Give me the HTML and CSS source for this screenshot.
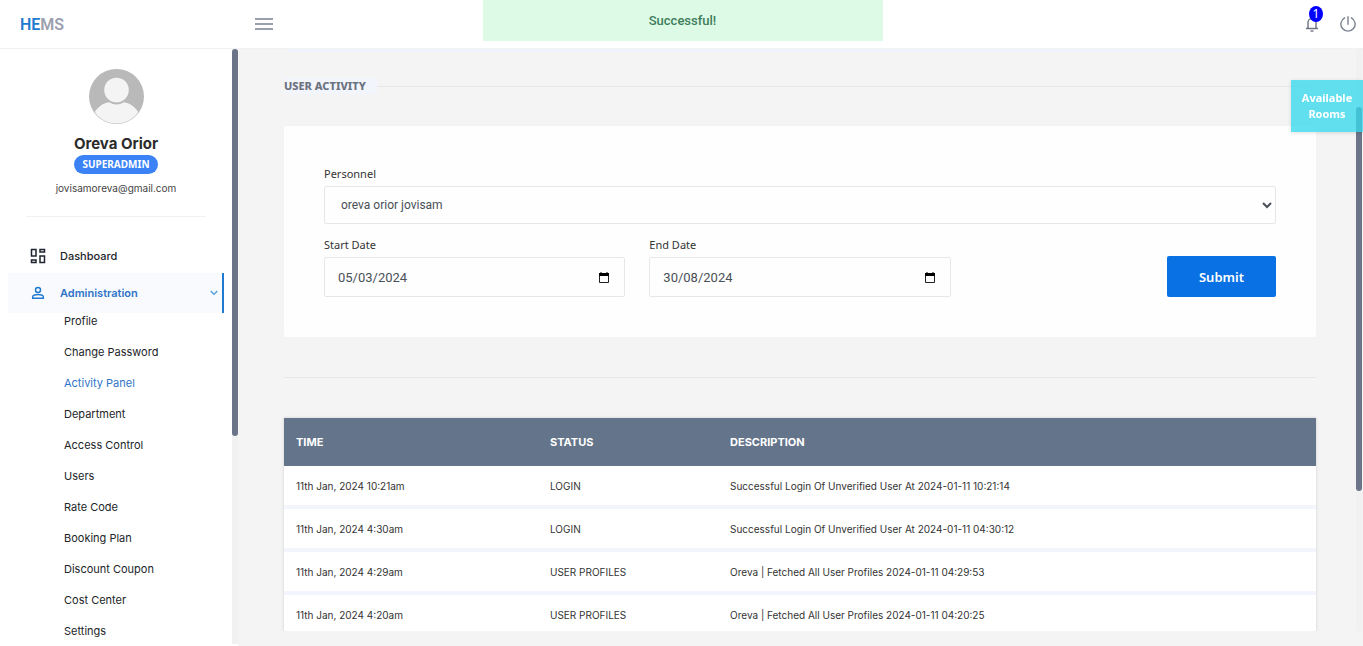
FILE: index.html
```html
<!DOCTYPE html>
<html lang="en">
<head>
    <meta charset="UTF-8">
    <meta name="viewport" content="width=device-width, initial-scale=1.0">
    <title>HEMS - User Activity</title>
    <link rel="stylesheet" href="styles.css">
</head>
<body>
    <header class="header">
        <a href="#" class="logo"><span>HE</span>MS</a>
        <button type="button" class="icon-btn menu-btn" aria-label="Toggle menu">
            <svg width="18" height="12" viewBox="0 0 18 12" fill="#9ca0ae"><path d="M0 0h18v2H0zM0 5h18v2H0zM0 10h18v2H0z"/></svg>
        </button>
        <div class="header-actions">
            <button type="button" class="icon-btn bell-btn" aria-label="Notifications">
                <svg width="14" height="16" viewBox="0 0 14 16" fill="none" stroke="#6b7280" stroke-width="1.4"><path d="M1 12.500h12M3 12.500V6.500a4 4 0 0 1 8 0v6M7 1v1.700"/><path d="M5.500 15h3"/></svg>
                <span class="badge">1</span>
            </button>
            <button type="button" class="icon-btn" aria-label="Log out">
                <svg width="16" height="16" viewBox="0 0 16 16" fill="none" stroke="#7b8290" stroke-width="1.4" stroke-linecap="round"><path d="M8 .8v7.4M4.600 1.800a7.100 7.100 0 1 0 6.800 0"/></svg>
            </button>
        </div>
    </header>

    <div class="alert" role="status">Successful!</div>

    <div class="layout">
        <aside class="sidebar">
            <div class="sidebar-content">
                <div class="profile">
                    <svg class="avatar" width="55" height="55" viewBox="0 0 55 55">
                        <defs><clipPath id="avatarClip"><circle cx="27.500" cy="27.500" r="27"/></clipPath></defs>
                        <circle cx="27.500" cy="27.500" r="27.500" fill="#b9b9b9"/>
                        <g clip-path="url(#avatarClip)" fill="#f4f4f4">
                            <path d="M4 46C8 38 14 34 20 33.200Q27.500 38 35 33.200C41 34 47 38 51 46V56H4z"/>
                            <circle cx="27.500" cy="21" r="12.300"/>
                        </g>
                    </svg>
                    <h2>Oreva Orior</h2>
                    <span class="role">SUPERADMIN</span>
                    <p>jovisamoreva@gmail.com</p>
                </div>

                <nav>
                    <a href="#" class="nav-link">
                        <svg width="16" height="16" viewBox="0 0 16 16" fill="none" stroke="#1f2430" stroke-width="1.500"><path d="M1.500 1.500h4.500v6.500H1.500zM10 1.500h4.500v2.500H10zM10 8h4.500v6.500H10zM1.500 12h4.500v2.500H1.500z"/></svg>
                        Dashboard
                    </a>
                    <a href="#" class="nav-link active">
                        <svg width="16" height="16" viewBox="0 0 16 16" fill="none" stroke="#1f7ad0" stroke-width="1.500"><circle cx="8" cy="4.900" r="2.500"/><path d="M2.700 13.300v-1.600c0-1.400 3-2.300 5.300-2.300s5.300.9 5.300 2.300v1.600z"/></svg>
                        Administration
                        <svg class="chevron" width="8" height="6" viewBox="0 0 8 6" fill="none" stroke="#4a97da" stroke-width="1.300"><path d="M.8 1L4 4.400 7.200 1"/></svg>
                    </a>
                    <ul class="submenu">
                        <li><a href="#">Profile</a></li>
                        <li><a href="#">Change Password</a></li>
                        <li><a href="#" class="current">Activity Panel</a></li>
                        <li><a href="#">Department</a></li>
                        <li><a href="#">Access Control</a></li>
                        <li><a href="#">Users</a></li>
                        <li><a href="#">Rate Code</a></li>
                        <li><a href="#">Booking Plan</a></li>
                        <li><a href="#">Discount Coupon</a></li>
                        <li><a href="#">Cost Center</a></li>
                        <li><a href="#">Settings</a></li>
                    </ul>
                </nav>
            </div>
            <div class="scrollbar"><div class="thumb"></div></div>
        </aside>

        <main class="main">
            <div class="content">
                <div class="top-strip"></div>
                <div class="section-title"><h1>USER ACTIVITY</h1></div>

                <form class="card">
                    <div class="form-group">
                        <label for="personnel">Personnel</label>
                        <select id="personnel">
                            <option>oreva orior jovisam</option>
                        </select>
                    </div>
                    <div class="form-row">
                        <div class="form-group">
                            <label for="startDate">Start Date</label>
                            <div class="date-field">
                                <input type="text" id="startDate" value="05/03/2024">
                                <button type="button" class="icon-btn" aria-label="Pick start date">
                                    <svg width="10" height="11" viewBox="0 0 10 11"><path d="M.5 2h9v8.500h-9z" fill="none" stroke="#222"/><path d="M0 1h10v3H0zM1.500 0h1v1h-1zM7.500 0h1v1h-1z" fill="#000"/></svg>
                                </button>
                            </div>
                        </div>
                        <div class="form-group">
                            <label for="endDate">End Date</label>
                            <div class="date-field">
                                <input type="text" id="endDate" value="30/08/2024">
                                <button type="button" class="icon-btn" aria-label="Pick end date">
                                    <svg width="10" height="11" viewBox="0 0 10 11"><path d="M.5 2h9v8.500h-9z" fill="none" stroke="#222"/><path d="M0 1h10v3H0zM1.500 0h1v1h-1zM7.500 0h1v1h-1z" fill="#000"/></svg>
                                </button>
                            </div>
                        </div>
                        <button type="submit" class="submit-btn">Submit</button>
                    </div>
                </form>

                <hr>

                <table>
                    <thead>
                        <tr>
                            <th class="col-time">TIME</th>
                            <th class="col-status">STATUS</th>
                            <th>DESCRIPTION</th>
                        </tr>
                    </thead>
                    <tbody>
                        <tr>
                            <td>11th Jan, 2024 10:21am</td>
                            <td>LOGIN</td>
                            <td>Successful Login Of Unverified User At 2024-01-11 10:21:14</td>
                        </tr>
                        <tr>
                            <td>11th Jan, 2024 4:30am</td>
                            <td>LOGIN</td>
                            <td>Successful Login Of Unverified User At 2024-01-11 04:30:12</td>
                        </tr>
                        <tr>
                            <td>11th Jan, 2024 4:29am</td>
                            <td>USER PROFILES</td>
                            <td>Oreva | Fetched All User Profiles 2024-01-11 04:29:53</td>
                        </tr>
                        <tr>
                            <td>11th Jan, 2024 4:20am</td>
                            <td>USER PROFILES</td>
                            <td>Oreva | Fetched All User Profiles 2024-01-11 04:20:25</td>
                        </tr>
                    </tbody>
                </table>
            </div>
            <div class="scrollbar"><div class="thumb"></div></div>
        </main>
    </div>

    <button type="button" class="rooms-btn">Available Rooms</button>
</body>
</html>
```
FILE: styles.css
```css
* {
    box-sizing: border-box;
}
body {
    margin: 0;
    height: 100vh;
    display: flex;
    flex-direction: column;
    overflow: hidden;
    background-color: #f4f4f4;
    color: #212529;
    font-family: Inter, sans-serif;
    font-size: 11px;
}
a {
    color: inherit;
    text-decoration: none;
}
h1, h2, p {
    margin: 0;
}
svg {
    display: block;
    flex: none;
}
.icon-btn {
    padding: 0;
    border: none;
    background: none;
    cursor: pointer;
}

/* header */
.header {
    display: flex;
    align-items: center;
    flex: none;
    height: 49px;
    padding: 0 7px 0 20px;
    background-color: #fff;
    border-bottom: 1px solid #f0f1f3;
}
.logo {
    width: 235px;
    font-family: Roboto, sans-serif;
    font-size: 16px;
    font-weight: 600;
    color: #9ca0ae;
}
.logo span {
    color: #1f7ad0;
}
.header-actions {
    display: flex;
    gap: 21px;
    margin-left: auto;
}
.bell-btn {
    position: relative;
}
.badge {
    position: absolute;
    top: -10px;
    left: 4px;
    width: 14px;
    height: 16px;
    border-radius: 50%;
    background-color: #00f;
    color: #fff;
    font-family: "Noto Sans", sans-serif;
    font-size: 12px;
    line-height: 16px;
}
.alert {
    position: fixed;
    top: 0;
    left: 50%;
    width: 400px;
    margin-left: -199px;
    background-color: #dcfae6;
    color: #3f7d5a;
    font-family: Roboto, sans-serif;
    font-size: 13px;
    font-weight: 500;
    line-height: 41px;
    text-align: center;
}

.layout {
    display: flex;
    flex: 1;
    min-height: 0;
}
.scrollbar {
    flex: none;
    width: 6px;
    background-color: #f1f1f1;
}
.thumb {
    height: 65%;
    border-radius: 3px;
    background-color: #6b7489;
}

/* sidebar */
.sidebar {
    display: flex;
    flex: none;
    width: 238px;
    padding-bottom: 2px;
    background-color: #fff;
}
.sidebar-content {
    flex: 1;
    padding: 20px 8px 0;
    overflow: hidden;
}
.profile {
    display: flex;
    flex-direction: column;
    align-items: center;
    margin: 0 18px 22px;
    padding-bottom: 20px;
    border-bottom: 1px solid #f1f1f3;
}
.profile h2 {
    margin-top: 10px;
    font-size: 15px;
    line-height: 20px;
    font-weight: 700;
    color: #2b2b2b;
}
.role {
    margin-top: 1px;
    padding: 0 8px;
    border-radius: 10px;
    background-color: #3b82f6;
    color: #fff;
    font-family: "Noto Sans", sans-serif;
    font-size: 10px;
    font-weight: 700;
    line-height: 19px;
}
.profile p {
    margin-top: 7px;
    font-size: 10px;
    line-height: 15px;
    color: #444;
}
.nav-link {
    display: flex;
    align-items: center;
    gap: 14px;
    height: 34px;
    padding: 0 6px 0 22px;
    font-weight: 500;
}
.nav-link.active {
    height: 40px;
    padding-right: 4px;
    border-right: 2px solid #1f7ad0;
    background-color: #f8fafd;
    color: #2f74c8;
    font-weight: 600;
}
.chevron {
    margin-left: auto;
}
.submenu {
    margin: 0;
    padding: 0 0 0 56px;
    list-style: none;
}
.submenu li {
    margin-bottom: 15px;
    line-height: 16px;
}
.submenu .current {
    color: #2f74c8;
}

/* main */
.main {
    display: flex;
    flex: 1;
    min-width: 0;
    margin: 0 1px 15px 0;
}
.main .thumb {
    height: 66%;
    margin-top: 58px;
}
.content {
    flex: 1;
    min-width: 0;
    padding: 0 40px 0 46px;
    overflow: hidden;
}
.top-strip {
    height: 3px;
    margin: 0 3px 26px;
    background-color: #eef3fc;
}
.section-title {
    display: flex;
    align-items: center;
    margin-bottom: 32px;
}
.section-title h1 {
    padding-right: 11px;
    background-color: #f3f5fc;
    color: #6b7280;
    font-family: "Noto Sans", sans-serif;
    font-size: 11px;
    font-weight: 800;
    line-height: 16px;
}
.section-title::after {
    content: "";
    flex: 1;
    height: 1px;
    background-color: #e5e7e9;
}
.card {
    padding: 40px;
    border-radius: 2px;
    background-color: #fefefe;
}
.form-group label {
    display: block;
    margin-bottom: 4px;
    font-family: "Noto Sans", sans-serif;
    font-size: 11px;
    line-height: 16px;
    color: #333;
}
.form-group select,
.date-field {
    width: 100%;
    border: 1px solid #e5e7eb;
    border-radius: 2px;
    background-color: #fefefe;
}
.form-group select {
    display: block;
    height: 38px;
    padding: 0 12px;
    padding-right: 0;
    color: #495057;
    font-family: Roboto, sans-serif;
    font-size: 12px;
}
.form-row {
    display: grid;
    grid-template-columns: repeat(3, 1fr);
    gap: 24px;
    align-items: end;
    margin-top: 13px;
}
.date-field {
    display: flex;
    align-items: center;
    height: 40px;
    padding: 0 15px 0 13px;
}
.date-field input {
    flex: 1;
    min-width: 0;
    padding: 0;
    border: none;
    outline: none;
    background: none;
    color: #495057;
    font-family: Roboto, sans-serif;
    font-size: 13px;
}
.submit-btn {
    justify-self: end;
    height: 41px;
    padding: 0 32px;
    border: none;
    border-radius: 2px;
    background-color: #0971e3;
    color: #fff;
    font-family: "Noto Sans", sans-serif;
    font-size: 13px;
    font-weight: 600;
    cursor: pointer;
}
hr {
    height: 1px;
    margin: 40px 0;
    border: none;
    background-color: #e5e7e9;
}
table {
    width: 100%;
    table-layout: fixed;
    border-spacing: 0;
    background-color: #fff;
    box-shadow: 0 0 3px rgba(0,0,0,0.15);
}
th, td {
    padding: 0 12px;
    text-align: left;
}
th {
    height: 48px;
    background-color: #64748b;
    color: #fff;
    font-size: 11px;
    font-weight: 700;
}
td {
    height: 43px;
    border-bottom: 4px solid #f3f5fc;
    font-size: 10px;
    color: #333;
}
.col-time {
    width: 254px;
}
.col-status {
    width: 180px;
}

.rooms-btn {
    position: fixed;
    top: 80px;
    right: 0;
    width: 72px;
    padding: 10px;
    border: none;
    background-color: rgba(56,217,236,0.78);
    box-shadow: 0 1px 4px rgba(0,0,0,0.12);
    color: #fff;
    font-family: "Noto Sans", sans-serif;
    font-size: 11px;
    font-weight: 700;
    line-height: 16px;
    cursor: pointer;
}
```
